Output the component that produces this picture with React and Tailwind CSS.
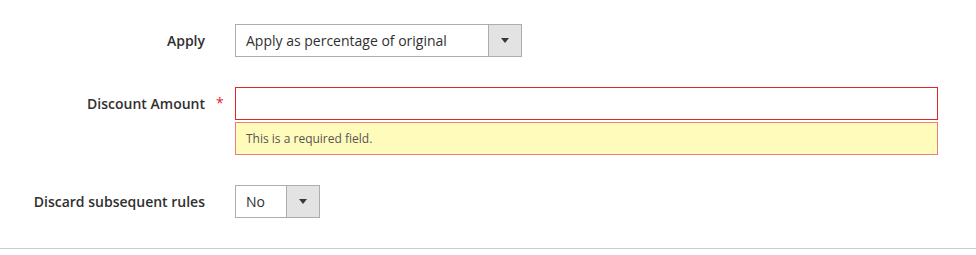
import React from "react";

function Arrow() {
  return (
    <div className="flex h-full w-[33px] shrink-0 items-center justify-center border-l border-[#adadad] bg-[#e3e3e3]">
      <svg width="8" height="5" viewBox="0 0 8 5">
        <polygon points="0,0 8,0 4,5" fill="#41362f" />
      </svg>
    </div>
  );
}

function Select({ value, width }) {
  return (
    <div className={`flex h-[33px] items-center border border-[#adadad] bg-white ${width}`}>
      <div className="flex-1 pl-[10px] text-[14px] text-[#303030]">{value}</div>
      <Arrow />
    </div>
  );
}

export default function App() {
  return (
    <div className="w-[976px] h-[255px] bg-white pt-[24px] font-['Open_Sans',sans-serif] text-[#303030]">
      <div className="flex flex-col gap-[30px] pr-[38px]">
        <div className="grid grid-cols-[205px_1fr] gap-x-[30px]">
          <div className="flex h-[33px] items-center justify-end text-[14px] font-semibold">Apply</div>
          <div>
            <Select value="Apply as percentage of original" width="w-[287px]" />
          </div>
        </div>
        <div className="grid grid-cols-[205px_1fr] gap-x-[30px]">
          <div className="flex h-[33px] items-center justify-end text-[14px] font-semibold">
            <span className="relative">
              Discount Amount
              <span className="absolute left-full top-[-1px] ml-[11px] text-[14px] font-normal text-[#e22626]">*</span>
            </span>
          </div>
          <div className="flex flex-col">
            <div className="h-[33px] border border-[#e22626] bg-white"></div>
            <div className="mt-[2px] flex h-[33px] items-center border border-[#ee7d7d] bg-[#fffbbb] px-[10px] text-[12px] text-[#555555]">
              This is a required field.
            </div>
          </div>
        </div>
        <div className="grid grid-cols-[205px_1fr] gap-x-[30px]">
          <div className="flex h-[33px] items-center justify-end text-[14px] font-semibold">Discard subsequent rules</div>
          <div>
            <Select value="No" width="w-[85px]" />
          </div>
        </div>
      </div>
      <div className="mt-[30px] border-t border-[#cccccc]"></div>
    </div>
  );
}
